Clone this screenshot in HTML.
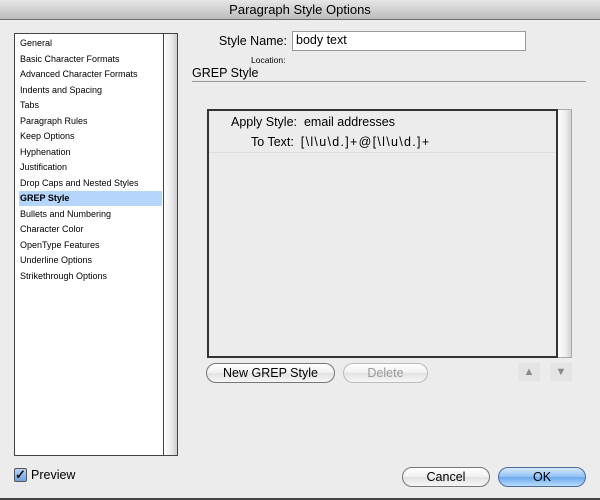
<!DOCTYPE html>
<html><head><style>
*{margin:0;padding:0;box-sizing:border-box}
body{width:600px;height:500px;background:#ececec;font-family:"Liberation Sans",sans-serif;position:relative;overflow:hidden;color:#000}
.a{position:absolute}
.title{left:0;top:0;width:600px;height:20px;background:linear-gradient(#e6e6e6,#bcbcbc);border-bottom:1px solid #6e6e6e;text-align:center;font-size:13px;line-height:20px}
.list{left:14px;top:33px;width:164px;height:423px;background:#fff;border:1px solid #444}
.sb{position:absolute;right:0;top:0;width:14px;height:100%;border-left:1px solid #444;background:linear-gradient(90deg,#fff,#e8e8e8 60%,#ccc)}
.it{position:absolute;left:4px;font-size:9px;height:15px;line-height:15px;width:143px;padding-left:1px}
.sel{background:#b5d5fd;font-weight:bold}
.btn{position:absolute;height:20px;border:1px solid #777;border-radius:10px;background:linear-gradient(#fff,#f0f0f0 50%,#e2e2e2 51%,#f6f6f6);font-size:12.5px;text-align:center;line-height:18px}
</style></head><body>
<div class="a title">Paragraph Style Options</div>
<div class="a list">
<div class="sb"></div>
<div class="it" style="top:2px">General</div>
<div class="it" style="top:17.5px">Basic Character Formats</div>
<div class="it" style="top:33px">Advanced Character Formats</div>
<div class="it" style="top:48.5px">Indents and Spacing</div>
<div class="it" style="top:64px">Tabs</div>
<div class="it" style="top:79.5px">Paragraph Rules</div>
<div class="it" style="top:95px">Keep Options</div>
<div class="it" style="top:110.5px">Hyphenation</div>
<div class="it" style="top:126px">Justification</div>
<div class="it" style="top:141.5px">Drop Caps and Nested Styles</div>
<div class="it sel" style="top:157px">GREP Style</div>
<div class="it" style="top:172.5px">Bullets and Numbering</div>
<div class="it" style="top:188px">Character Color</div>
<div class="it" style="top:203.5px">OpenType Features</div>
<div class="it" style="top:219px">Underline Options</div>
<div class="it" style="top:234.5px">Strikethrough Options</div>
</div>
<div class="a" style="left:200px;top:34px;width:87px;text-align:right;font-size:12.5px">Style Name:</div>
<div class="a" style="left:292px;top:31px;width:234px;height:20px;background:#fff;border:1px solid #999;font-size:12.5px;padding:1px 3px">body text</div>
<div class="a" style="left:251px;top:55px;font-size:8.5px">Location:</div>
<div class="a" style="left:192px;top:66px;font-size:12.5px">GREP Style</div>
<div class="a" style="left:192px;top:81px;width:394px;height:1px;background:#999"></div>
<div class="a" style="left:557px;top:109px;width:15px;height:249px;background:linear-gradient(90deg,#fff,#eee 60%,#d2d2d2);border:1px solid #aaa;border-left:none"></div>
<div class="a" style="left:207px;top:109px;width:351px;height:249px;border:2px solid #333;background:#ececec">
<div class="a" style="left:22px;top:4px;font-size:12.5px">Apply Style:&nbsp; email addresses</div>
<div class="a" style="left:42px;top:24px;font-size:12.5px">To Text:&nbsp; <span style="letter-spacing:1.3px">[\l\u\d.]+@[\l\u\d.]+</span></div>
<div class="a" style="left:0;top:41px;width:347px;height:1px;background:#fff;border-top:1px solid #ddd"></div>
</div>
<div class="btn" style="left:206px;top:363px;width:129px">New GREP Style</div>
<div class="btn" style="left:343px;top:363px;width:85px;color:#999;border-color:#bbb">Delete</div>
<div class="a" style="left:518px;top:363px;width:22px;height:18px;background:#e4e4e4;color:#888;font-size:11px;text-align:center;line-height:18px">▲</div>
<div class="a" style="left:550px;top:363px;width:22px;height:18px;background:#e4e4e4;color:#888;font-size:11px;text-align:center;line-height:18px">▼</div>
<div class="a" style="left:14px;top:468px;width:13px;height:14px;border:1px solid #555;border-radius:2px;background:linear-gradient(#b8d4f5,#6fa2e0);font-size:13px;line-height:11px;color:#111;text-align:center;font-weight:bold">✓</div>
<div class="a" style="left:31px;top:468px;font-size:12.5px">Preview</div>
<div class="btn" style="left:402px;top:467px;width:88px">Cancel</div>
<div class="btn" style="left:498px;top:467px;width:88px;background:linear-gradient(#d6e9fc,#90c0f4 50%,#6aa8ee 51%,#b8dcfd);border-color:#4a6c9b">OK</div>
<div class="a" style="left:0;top:498px;width:600px;height:2px;background:#444"></div>
</body></html>
